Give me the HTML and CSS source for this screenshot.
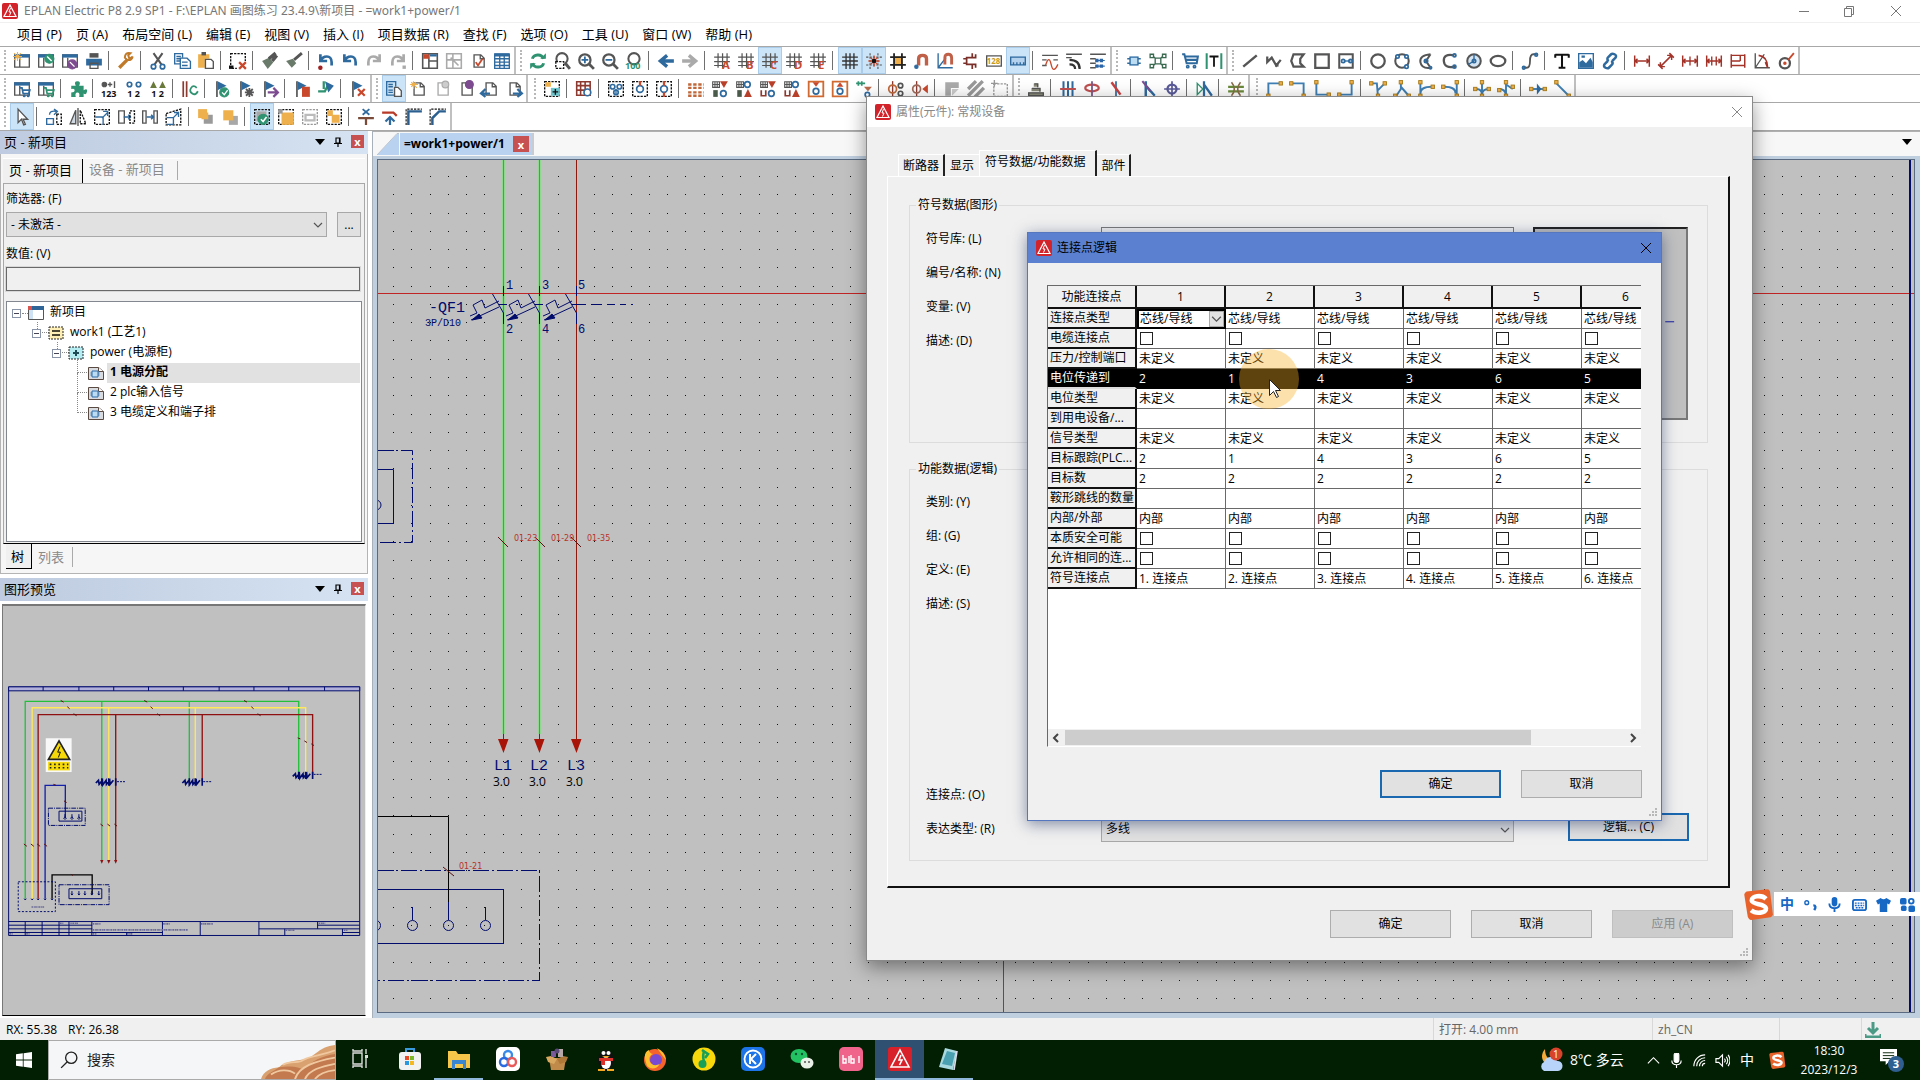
FILE: index.html
```html
<!DOCTYPE html>
<html lang="zh-CN">
<head>
<meta charset="utf-8">
<title>EPLAN Electric P8 2.9 SP1</title>
<link rel="stylesheet" href="styles.css">
</head>
<body>
<svg class="defs" aria-hidden="true">
  <symbol id="logo" viewBox="0 0 16 16"><rect width="16" height="16" rx="2" fill="#d2232a"/><path d="M8 2 14 13.500H2Z" fill="none" stroke="#fff" stroke-width="1.200"/><path d="M8.500 5 7 9h2l-1.500 3.500" fill="none" stroke="#fff"/></symbol>
  <symbol id="chev" viewBox="0 0 12 12"><path d="M2 4l4 4 4-4" fill="none" stroke="#555" stroke-width="1.200"/></symbol>
  <symbol id="close" viewBox="0 0 12 12"><path d="M1 1l10 10M11 1 1 11" fill="none" stroke="currentColor"/></symbol>
  <symbol id="pin" viewBox="0 0 10 10"><path d="M3 1h4v5H3zM1 6.500h8M5 6v4M6.500 1v5" fill="none" stroke="#000" stroke-width="1.200"/></symbol>
  <symbol id="down" viewBox="0 0 10 6"><path d="M0 0h10L5 6z"/></symbol>
  <symbol id="page" viewBox="0 0 16 16"><path d="M.5 2.500h10l5 4v8H.5z" fill="#d8dce0" stroke="#5a4a42"/><path d="M10.500 2.500v4h5" fill="#fff" stroke="#5a4a42"/><path d="M4 6h6v6H4z" fill="#bcdcf4" stroke="#2f6da8"/><path d="M2.500 8h1.500M2.500 10h1.500M10 8h1.500M10 10h1.500" stroke="#2f6da8"/></symbol>
  <symbol id="grip" viewBox="0 0 9 9"><path d="M6 0h2v2H6zM3 3h2v2H3zM6 3h2v2H6zM0 6h2v2H0zM3 6h2v2H3zM6 6h2v2H6z" fill="#b8b8b8"/></symbol>
  <symbol id="sogou" viewBox="0 0 28 28"><path d="M4 3 22 1q2 0 2.500 2L27 23q0 2-2 2.500L8 28q-2 0-3-3L2 6Q2 4 4 3" fill="#e8622a"/><path d="M21 9.500C17 5.500 8 7 8.500 11c.5 4 12 2.500 12.500 7 .5 4-9 5-13 1.500" fill="none" stroke="#fff" stroke-width="4"/></symbol>
</svg>

<div class="app">
  <header class="titlebar">
    <svg class="logo"><use href="#logo"/></svg>
    <h1>EPLAN Electric P8 2.9 SP1 - F:\EPLAN 画图练习 23.4.9\新项目 - =work1+power/1</h1>
    <div class="winbtns">
      <button aria-label="最小化"><svg viewBox="0 0 12 12"><path d="M1 6.500h10"/></svg></button>
      <button aria-label="还原"><svg viewBox="0 0 12 12"><path d="M1.500 3.500h7v8h-7zM3.500 3.500v-2h7v8h-2"/></svg></button>
      <button aria-label="关闭"><svg viewBox="0 0 12 12"><path d="M1 1l10 10M11 1 1 11"/></svg></button>
    </div>
  </header>
  <nav class="menu">
    <button>项目 (P)</button><button>页 (A)</button><button>布局空间 (L)</button><button>编辑 (E)</button><button>视图 (V)</button><button>插入 (I)</button><button>项目数据 (R)</button><button>查找 (F)</button><button>选项 (O)</button><button>工具 (U)</button><button>窗口 (W)</button><button>帮助 (H)</button>
  </nav>
  <div class="toolrow" id="row1"></div>
  <div class="toolrow" id="row2"></div>
  <div class="toolrow" id="row3"></div>

  <main class="work">
    <aside class="side">
      <section class="panel">
        <header class="phead"><h2>页 - 新项目</h2><svg class="dn"><use href="#down"/></svg><svg class="pin"><use href="#pin"/></svg><button class="x" aria-label="关闭">x</button></header>
        <div class="pbody">
          <div class="ptabs"><button class="on">页 - 新项目</button><button>设备 - 新项目</button></div>
          <div class="pform">
            <label for="filter">筛选器: (F)</label>
            <div class="frow">
              <div class="combo"><select id="filter"><option>- 未激活 -</option></select><svg><use href="#chev"/></svg></div>
              <button class="more">...</button>
            </div>
            <label for="val">数值: (V)</label>
            <input id="val" class="val" type="text">
            <ul class="tree">
              <li class="d0"><i></i><svg viewBox="0 0 16 16"><path d="M.5 1.500h15v13H.5z" fill="#fff" stroke="#555"/><path d="M0 1h4v4H0z" fill="#d9534f"/><path d="M4 1h12v4H4z" fill="#2f6496"/><path d="M1 5h4v9H1z" fill="#cfe2f3"/></svg><span>新项目</span></li>
              <li class="d1"><i></i><svg viewBox="0 0 16 16"><path d="M1 2h14v12H1z" fill="#fdeeb5" stroke="#222" stroke-dasharray="2 1"/><path d="M4 6h8M4 10h8" stroke="#4a4432" stroke-width="2"/></svg><span>work1 (工艺1)</span></li>
              <li class="d2"><i></i><svg viewBox="0 0 16 16"><path d="M1 2h14v12H1z" fill="#b5ecf2" stroke="#222" stroke-dasharray="2 1"/><path d="M5 8h6M8 5v6" stroke="#1c4a55" stroke-width="2"/></svg><span>power (电源柜)</span></li>
              <li class="d3 sel"><svg><use href="#page"/></svg><span>1 电源分配</span></li>
              <li class="d3"><svg><use href="#page"/></svg><span>2 plc输入信号</span></li>
              <li class="d3"><svg><use href="#page"/></svg><span>3 电缆定义和端子排</span></li>
            </ul>
          </div>
          <div class="btabs"><button class="on">树</button><button>列表</button></div>
        </div>
      </section>
      <section class="panel grow">
        <header class="phead"><h2>图形预览</h2><svg class="dn"><use href="#down"/></svg><svg class="pin"><use href="#pin"/></svg><button class="x" aria-label="关闭">x</button></header>
        <div class="preview">
          <svg viewBox="6 103 1092 1232">
            <g fill="none" stroke="#000b6b" stroke-width="3">
              <path d="M23 346h1059v750H23z"/><path d="M23 346h1059v12H23z" fill="#b0b0da"/>
              <path d="M127 346v12M235 346v12M340 346v12M445 346v12M550 346v12M658 346v12M763 346v12M868 346v12M976 346v12"/>
              <path d="M23 1054h1059M23 1065h252M23 1076h252M23 1087h465M73 1054v42M124 1054v42M175 1054v42M205 1054v42M274 1054v42M487 1054v42M601 1054v42M778 1054v42M778 1076h304M955 1054v22M856 1076v20M1030 1076v20M955 1065h127M1030 1087h52M379 1087v9"/>
            </g>
            <g fill="none" stroke-width="4">
              <path stroke="#22c03a" d="M73 985V390h825v220M304 390v482M568 390v240"/>
              <path stroke="#ffe95a" d="M94 985V409h825v200M325 409v463M586 409v220"/>
              <path stroke="#8e1010" d="M112 985V430h828v180M346 430v442M607 430v200"/>
              <path stroke="#1420a8" d="M133 985V643h61v98"/>
              <path stroke="#000" d="M154 985v-72h121v58"/>
            </g>
            <g fill="none" stroke="#000b6b" stroke-width="3">
              <path d="M143 712h111v52H143zM175 943h151v60H175z" stroke-dasharray="14 3 3 3"/><path d="M52 934h112v90H52z" stroke-dasharray="6 5"/>
              <path d="M175 721h69v30h-69zM205 955h99v30h-99zM193 730v10M214 730v10M235 730v10M214 962v12M235 962v12M253 962v12M274 962v12M295 962v12"/>
              <path stroke-width="3" d="M189 742l4 4 4-4-4-4zM210 742l4 4 4-4-4-4zM231 742l4 4 4-4-4-4zM211 970l3 4 3-4M232 970l3 4 3-4M250 970l3 4 3-4M271 970l3 4 3-4M292 970l3 4 3-4M70 985l3 4 3-4M91 985l3 4 3-4M109 985l3 4 3-4M130 985l3 4 3-4M151 985l3 4 3-4"/>
              <path stroke-width="5" d="M286 636l8-8 2 12 10-12 1 14 10-14 1 12 10-12 1 12 10-12M304 622v22M325 622v22M346 622v22M547 636l8-8 2 12 10-12 1 14 10-14 1 12 10-12 1 12 10-12M568 622v22M586 622v22M607 622v22M880 616l8-8 2 12 10-12 1 14 10-14 1 12 10-12 1 12 10-12M898 602v22M919 602v22M940 602v22"/>
              <path d="M350 632h25M610 632h25M943 610h25" stroke-dasharray="6 3"/>
            </g>
            <path stroke="#5c1010" stroke-width="3" fill="none" d="M180 387l9 5M432 387l9 5M733 387l9 5M200 406l7 6M451 406l7 6M755 406l7 6M219 427l9 6M471 427l9 6M774 427l9 6M69 820l9 7M90 820l9 7M109 820l9 7M130 820l9 7M300 760l8 6M321 760l8 6M342 760l8 6M895 500l8 3M915 509l8 5M936 518l8 5M158 640l8 3M190 690l8 5M211 911l6 4"/>
            <path fill="#8e1010" d="M299 868h10l-5 12zM320 868h10l-5 12zM341 868h10l-5 12z"/>
            <path fill="#f8f8f8" d="M135 501h78v102h-78z"/><path d="M175 509l32 56h-64z" fill="#f5d90a" stroke="#222" stroke-width="5"/><path d="M178 526l-7 17h8l-6 16" fill="none" stroke="#111" stroke-width="3"/><path fill="#f5d90a" d="M142 572h66v26h-66z"/><path d="M147 580h56M147 590h56" stroke="#222" stroke-width="5" stroke-dasharray="5 8"/>
            <path d="M92 1010h38M276 1079h288M603 1061h36M276 1061h24M489 1061h20M205 1059h28M178 1059h10M858 1080h28M958 1059h20M1034 1080h12M25 1091h10M76 1091h10M276 1091h12M380 1091h16" stroke="#6a6a98" stroke-width="5" stroke-dasharray="5 2 3 1"/>
          </svg>
        </div>
      </section>
    </aside>

    <section class="editor">
      <div class="etabs">
        <div class="etab"><svg class="slant" viewBox="0 0 22 22"><path d="M0 22 20 1h2v21z" fill="#b9d2f0"/><path d="M0 22 20 .5h2" fill="none" stroke="#b9c4d2"/></svg><button class="ename">=work1+power/1</button><button class="x" aria-label="关闭">x</button></div>
        <svg class="dn"><use href="#down"/></svg>
      </div>
      <div class="cframe">
        <svg class="canvas">
          <g transform="translate(-377 -159)">
            <path id="dots" fill="none" stroke="#111" shape-rendering="crispEdges"/>
            <path d="M503.500 159v575M539.500 159v575" stroke="#8fd68f" stroke-width="3"/><path d="M503.500 159v575M539.500 159v575" stroke="#2fb52f"/>
            <path d="M576.500 159v590M503.500 734v15M539.500 734v15" stroke="#8c1a0c"/>
            <path d="M377 293.500h1540M1003.500 200v820" stroke="#c02424"/>
            <g fill="none" stroke="#000b6b">
              <path d="M503.500 286v10M539.500 286v10M576.500 286v10"/>
              <path id="pole" d="M492.500 294l11 19v11M499 301l-14 7-3-8-9 5 4 8-7 3M499 307l-28 13"/>
              <use href="#pole" x="36"/><use href="#pole" x="73"/>
              <path d="M472 320l7-6 3 4zM508 320l7-6 3 4zM545 320l7-6 3 4z" fill="#000b6b"/>
              <path d="M499 304.500h8M516 304.500h2M535 304.500h8M572 304.500h14M591 304.500h11M607 304.500h8M620 304.500h6M631 304.500h2"/>
              <path d="M377 450.500h35.500v92H377M377 870.500h162.500v110H377" stroke-dasharray="16 3 2 3"/>
              <path d="M377 469.500h16.500v54H377M377 889.500h126.500v54H377M412.500 907v13M448.500 900v20M485.500 907v13"/>
              <circle cx="376" cy="505" r="5"/><circle cx="375" cy="925.500" r="5.500"/><circle cx="412.500" cy="925.500" r="5"/><circle cx="448.500" cy="925.500" r="5"/><circle cx="485.500" cy="925.500" r="5"/>
              <path d="M1910 159v860" stroke-width="2"/>
            </g>
            <path d="M377 816.500h71.500V902" fill="none" stroke="#000"/>
            <path d="M498 537l10 10M535 537l10 10M571 537l10 10M443 867l11 9" stroke="#5c1010"/>
            <path d="M498 739h10.500l-5 14zM534 739h10.500l-5 14zM571 739h10.500l-5 14z" fill="#a81408"/>
            <g class="nav"><text x="506" y="289">1</text><text x="542" y="289">3</text><text x="578" y="289">5</text><text x="506" y="333">2</text><text x="542" y="333">4</text><text x="578" y="333">6</text><text x="425" y="326" class="sm">3P/D10</text><text x="429" y="312" class="big">-QF1</text><text x="494" y="770" class="big">L1</text><text x="530" y="770" class="big">L2</text><text x="567" y="770" class="big">L3</text></g>
            <g class="blk"><text x="493" y="786">3.0</text><text x="529" y="786">3.0</text><text x="566" y="786">3.0</text></g>
            <g class="red"><text x="514" y="541">01-23</text><text x="551" y="541">01-29</text><text x="587" y="541">01-35</text><text x="459" y="869">01-21</text></g>
          </g>
        </svg>
      </div>
    </section>
  </main>

  <footer class="status"><span class="s0">RX: 55.38</span><span class="s1">RY: 26.38</span><span class="s2">打开: 4.00 mm</span><span class="s3">zh_CN</span><span class="s4"></span><span class="s5"><svg viewBox="0 0 16 16"><path d="M8 0v9M3 6l5 5 5-5M0 12v3h16v-3" fill="none" stroke="#4a9a86" stroke-width="3"/></svg></span></footer>

  <footer class="taskbar">
    <button class="start" aria-label="开始"><svg viewBox="0 0 16 16"><path fill="#fff" d="M0 2.300 6.800 1.300v6.200H0zM7.600 1.200 16 0v7.500H7.600zM0 8.400h6.800v6.300L0 13.700zM7.600 8.400H16V16l-8.400-1.200z"/></svg></button>
    <label class="search"><svg viewBox="0 0 16 16"><circle cx="10" cy="6" r="5"/><path d="M6.500 9.500 1 15"/></svg><input type="search" placeholder="搜索" aria-label="搜索">
      <svg class="canyon" viewBox="0 0 74 38" preserveAspectRatio="none"><path d="M0 38c3-9 9-12 18-13 6-8 20-7 28-10 8-2 12-13 28-15v38z" fill="#d9a070"/><path d="M18 25c12-2 20-1 24 3 8-10 20-16 32-18v28H4c2-6 8-8 14-13z" fill="#c27a4e"/><path d="M10 33c8-6 18-6 24-1M22 22c8-5 16-1 20-5s22-6 32-11M34 38c4-14 20-20 40-24M44 38c4-10 16-14 30-17M54 38c4-6 12-9 20-10" fill="none" stroke="#f0c8a0" stroke-width="2"/></svg></label>
    <div class="apps" id="apps"></div>
    <div class="tray">
      <svg class="wx" viewBox="0 0 26 26"><path d="M7 2c0 8 4 12 11 12-3 4-13 5-14-4Q4 5 7 2" fill="#f5a83a"/><path d="M6 24a5 5 0 0 1 0-9 7 7 0 0 1 13-1 5 5 0 0 1 1 10z" fill="#b8d4f8"/><circle cx="18" cy="7" r="6.500" fill="#d8432c"/><text x="15" y="11" font-size="10" fill="#fff">1</text></svg>
      <span class="wt">8℃ 多云</span>
      <svg viewBox="0 0 16 16" class="st"><path d="M2 11l6-6 6 6"/></svg>
      <svg viewBox="0 0 16 16" class="st"><rect x="5.500" y="0" width="5" height="10" rx="2" fill="#fff"/><path d="M3 8q0 4.500 5 4.500T13 8M8 12v4"/></svg>
      <svg viewBox="0 0 16 16" class="st"><path d="M2 14A12 12 0 0 1 14 2M5 14a9 9 0 0 1 9-9M8 14a6 6 0 0 1 6-6M11 14a3 3 0 0 1 3-3"/></svg>
      <svg viewBox="0 0 16 16" class="st"><path d="M1 6h3l4-4v12l-4-4H1zM10 6q2 2 0 4M12 4q3 4 0 8M14 2q4 6 0 12"/></svg>
      <span class="ime">中</span>
      <svg viewBox="0 0 28 28" class="sg"><use href="#sogou"/></svg>
      <time class="clock"><span>18:30</span><span>2023/12/3</span></time>
      <div class="note"><svg viewBox="0 0 18 18"><path d="M0 0h18v13h-8l-4 4v-4H0z" fill="#fff"/><path d="M3 4h12M3 7h12M3 10h8" stroke="#031f03"/></svg><b>3</b></div>
    </div>
  </footer>
</div>

<section class="dlg props" role="dialog" aria-label="属性(元件): 常规设备">
  <header><svg class="logo"><use href="#logo"/></svg><h2>属性(元件): 常规设备</h2><button class="cl" aria-label="关闭"><svg><use href="#close"/></svg></button></header>
  <div class="dtabs"><button>断路器</button><button>显示</button><button class="on">符号数据/功能数据</button><button>部件</button></div>
  <div class="dpage">
    <fieldset class="g1"><legend>符号数据(图形)</legend>
      <div class="cols">
        <div class="fields">
          <label for="lib">符号库: (L)</label><input id="lib" type="text">
          <label for="num">编号/名称: (N)</label><input id="num" type="text">
          <label for="var">变量: (V)</label><input id="var" type="text">
          <label for="d1">描述: (D)</label><input id="d1" type="text">
        </div>
        <div class="sym"><svg viewBox="0 0 153 191"><path d="M20 94h124" stroke="#1418a0" stroke-dasharray="9 5" fill="none"/></svg></div>
      </div>
    </fieldset>
    <fieldset class="g2"><legend>功能数据(逻辑)</legend>
      <div class="fields">
        <label for="ty">类别: (Y)</label><input id="ty" type="text">
        <label for="gr">组: (G)</label><input id="gr" type="text">
        <label for="de">定义: (E)</label><input id="de" type="text">
        <label for="d2">描述: (S)</label><input id="d2" type="text">
      </div>
      <div class="cols bot">
        <div class="fields">
          <label for="co">连接点: (O)</label><input id="co" type="text">
          <label for="re">表达类型: (R)</label><div class="combo"><select id="re"><option>多线</option></select><svg><use href="#chev"/></svg></div>
        </div>
        <button class="btn def">逻辑... (C)</button>
      </div>
    </fieldset>
  </div>
  <div class="btns"><button class="btn">确定</button><button class="btn">取消</button><button class="btn" disabled>应用 (A)</button></div>
  <svg class="rsz"><use href="#grip"/></svg>
</section>

<section class="dlg logic" role="dialog" aria-label="连接点逻辑">
  <header><svg class="logo"><use href="#logo"/></svg><h2>连接点逻辑</h2><button class="cl" aria-label="关闭"><svg><use href="#close"/></svg></button></header>
  <div class="gridbox">
    <div class="gclip"><table><thead><tr><th>功能连接点</th><th>1</th><th>2</th><th>3</th><th>4</th><th>5</th><th>6</th></tr></thead><tbody id="grid"></tbody></table></div>
    <div class="sb"><svg viewBox="0 0 12 12"><path d="M8 2 4 6l4 4"/></svg><i></i><svg viewBox="0 0 12 12"><path d="M4 2l4 4-4 4"/></svg></div>
  </div>
  <div class="btns"><button class="btn def">确定</button><button class="btn">取消</button></div>
  <svg class="rsz"><use href="#grip"/></svg>
</section>

<div class="imebar">
  <svg class="big" viewBox="0 0 28 28"><use href="#sogou"/></svg>
  <div><b>中</b>
  <svg viewBox="0 0 16 16"><circle cx="4" cy="6" r="2" fill="none" stroke="#1668c4" stroke-width="1.500"/><path d="M11 9q4 0 1 5" fill="none" stroke="#1668c4" stroke-width="2.500"/></svg>
  <svg viewBox="0 0 16 16"><rect x="5" y="0" width="6" height="10" rx="3" fill="#1668c4"/><path d="M2.500 7q0 5 5.500 5t5.500-5M8 12v4" fill="none" stroke="#1668c4" stroke-width="2"/></svg>
  <svg viewBox="0 0 16 16"><rect x="1" y="3" width="14" height="11" rx="2" fill="none" stroke="#1668c4" stroke-width="2"/><path d="M3 6.500h10M3 9h10M4 11.500h8" stroke="#1668c4" stroke-width="1.500" stroke-dasharray="2 1"/></svg>
  <svg viewBox="0 0 16 16"><path d="M5 1q3 3 6 0l5 3-2 4-2-1v9H4V7L2 8 0 4z" fill="#1668c4"/></svg>
  <svg viewBox="0 0 16 16" fill="#1668c4"><rect y="1" width="7" height="7" rx="2"/><rect x="1" y="9" width="6" height="6" rx="2"/><rect x="9" y="9" width="7" height="7" rx="2"/><circle cx="12" cy="4.500" r="2.500" fill="none" stroke="#1668c4" stroke-width="2"/></svg></div>
</div>
<div class="spot"></div>
<svg class="cursor" viewBox="0 0 12 19"><path d="M.5.5v16l4-4 3 6 2-1-3-6h5z" fill="#fff" stroke="#222"/></svg>
<script src="app.js"></script>
</body>
</html>
```
FILE: styles.css
```css
*, *::before { box-sizing: border-box; }
html, body { height: 100%; }
body { margin: 0; overflow: hidden; font: 12px/16px "Open Sans", "Noto Sans CJK SC", sans-serif; color: #000; background: #f0f0f0; }
h1, h2, ul { margin: 0; padding: 0; font-size: inherit; font-weight: 400; list-style: none; }
button { font: inherit; color: inherit; background: none; border: 0; padding: 0; white-space: nowrap; }
input, select { font: inherit; color: inherit; border-radius: 0; margin: 0; }
svg { display: block; flex: none; }
.defs { position: absolute; width: 0; height: 0; }
.logo { width: 16px; height: 16px; }
.app { height: 100vh; display: flex; flex-direction: column; }

.titlebar { height: 23px; display: flex; align-items: center; gap: 6px; padding-left: 2px; background: #fff; color: #777; flex: none; border-bottom: 1px solid #f0f0f0; }
.titlebar h1 { font-family: "Noto Sans", "Noto Sans CJK SC", sans-serif; }
.winbtns { margin-left: auto; display: flex; }
.winbtns button { width: 45px; display: grid; place-items: center; }
.winbtns button:last-child { width: 49px; }
.winbtns svg { width: 12px; height: 12px; fill: none; stroke: #777; }
.menu { height: 23px; display: flex; padding: 0 0 2px 10px; background: #fff; font-size: 13px; flex: none; }
.menu button { padding: 0 7px; }

.toolrow { height: 28px; display: flex; background: #fff; border-top: 1px solid #a8a8a8; flex: none; }
#row3 { height: 29px; border-bottom: 1px solid #a8a8a8; }
.bar { display: flex; align-items: stretch; border-right: 2px solid #c0c0c0; }
.bar::before { content: ""; width: 2px; margin: 3px 4px; border-left: 2px dotted #b8b8b8; }
.bar.wide::before { margin-left: 6px; }
.bar i { width: 8px; padding: 4px 0; }
.bar i::before { content: ""; display: block; width: 1px; height: 100%; margin-left: 2px; background: #707070; }
.bar button { width: 24px; display: grid; place-items: center; }
.bar button.on { background: #cce4f7; outline: 1px solid #a9cdea; outline-offset: -1px; }
.bar svg { width: 18px; height: 18px; overflow: visible; }

.work { flex: 1; min-height: 0; display: flex; gap: 4px; background: #fff; }
.side { width: 368px; flex: none; display: flex; flex-direction: column; gap: 4px; padding-bottom: 2px; }
.panel { display: flex; flex-direction: column; height: 443px; }
.panel.grow { height: auto; flex: 1; min-height: 0; gap: 3px; }
.phead { height: 23px; display: flex; align-items: center; padding: 0 4px 2px; background: linear-gradient(90deg, #becbe0, #d5e3f2); font-size: 13px; flex: none; }
.phead h2 { flex: 1; }
.dn { width: 10px; height: 6px; }
.pin { width: 10px; height: 10px; margin: 0 8px; }
.x { width: 13px; height: 13px; background: #c75050; color: #fff; font-size: 11px; line-height: 10px; font-weight: 700; }
.pbody { flex: 1; display: flex; flex-direction: column; border: 1px solid #b4b4b4; border-top: 0; background: #f6f6f6; padding: 4px 2px 3px; }
.ptabs { display: flex; height: 25px; font-size: 13px; border-top: 1px solid #fff; }
.ptabs button, .btabs button { color: #8a8a8a; padding: 0 12px 0 6px; border-right: 1px solid #aaa; margin: 3px 0; }
.ptabs button { margin: 2px 0 3px; padding-bottom: 3px; }
.ptabs .on { color: #000; margin: 0; padding-right: 10px; border-right: 1px solid #000; background: #f0f0f0; }
.pform { flex: 1; border: 1px solid #a8a8a8; border-bottom: 1px solid #000; background: #f0f0f0; padding: 5px 2px 1px; display: flex; flex-direction: column; }
.pform label { height: 23px; line-height: 20px; }
.frow { display: flex; gap: 10px; height: 25px; margin-bottom: 7px; }
.combo { flex: 1; position: relative; background: #e1e1e1; border: 1px solid #a8a8a8; height: 25px; }
.combo select { width: 100%; height: 100%; appearance: none; border: 0; background: none; padding: 0 4px; }
.combo svg { position: absolute; right: 2px; top: 6px; width: 12px; height: 12px; }
.more { width: 24px; background: #e1e1e1; border: 1px solid #a8a8a8; margin-right: 1px; }
.val { height: 24px; background: #f0f0f0; border: 1px solid #696969; outline: 1px solid #d8d8d8; margin-right: 2px; }
.tree { flex: 1; margin-top: 10px; background: #fff; border: 1px solid #828790; padding: 1px 0; }
.tree li { height: 20px; display: flex; align-items: center; position: relative; gap: 6px; }
.tree li svg { width: 16px; height: 16px; }
.tree li span { padding: 1px 0 3px; flex: 1; }
.tree li i { width: 9px; height: 9px; border: 1px solid #8a94a8; background: linear-gradient(#445, #445) center / 5px 1px no-repeat #fff; margin-right: 1px; }
.tree li::before { content: ""; position: absolute; border-left: 1px dotted #888; border-bottom: 1px dotted #888; }
.d0 { padding-left: 5px; } .d1 { padding-left: 25px; } .d2 { padding-left: 45px; } .d3 { padding-left: 81px; }
.tree .d0::before { left: 15px; top: 10px; width: 6px; }
.tree .d1::before, .tree .d2::before { left: 30px; top: -1px; height: 11px; width: 12px; z-index: 0; }
.tree .d2::before { left: 50px; }
.tree .d3::before { left: 70px; top: -10px; height: 20px; width: 10px; }
.tree i, .tree li svg { position: relative; z-index: 1; }
.sel span { background: #e1e1e1; font-weight: 700; margin: 0 1px 0 -3px; }
.tree .sel span { padding: 1px 3px 3px; }
.btabs { height: 26px; display: flex; font-size: 13px; padding-left: 3px; }
.btabs .on { color: #000; margin: 0 0 1px; padding: 0 7px 0 5px; border-right: 1px solid #000; border-bottom: 1px solid #000; background: #f0f0f0; }
.btabs button + button { padding: 0 8px 0 6px; }
.preview { flex: 1; min-height: 0; margin: 0 2px; border: 1px solid #000; border-top: 2px solid #777; border-left-color: #777; border-right-color: #eee; background: #c0c0c0; }
.preview svg { width: 100%; height: 100%; }

.editor { flex: 1; min-width: 0; display: flex; flex-direction: column; border-left: 1px solid #a8b0ba; }
.etabs { height: 25px; display: flex; align-items: flex-end; background: #f7f7f7; padding: 0 8px 1px 4px; border-top: 1px solid #b0b0b0; flex: none; }
.etab { display: flex; height: 22px; align-items: center; border-right: 2px solid #c8ccd2; padding-right: 3px; background: linear-gradient(#b9d2f0, #b9d2f0) right / 132px 100% no-repeat; }
.slant { width: 22px; height: 22px; }
.ename { font-weight: 700; padding: 0 8px 0 5px; }
.etab .x { width: 16px; height: 16px; line-height: 13px; }
.etabs > .dn { margin: 0 0 10px auto; }
.cframe { flex: 1; min-height: 0; border: 3px solid #c0cfe0; border-left-width: 4px; border-bottom-width: 5px; border-right-width: 5px; display: flex; background: #c0c0c0; }
.canvas { flex: 1; width: 100%; height: 100%; outline: 1px solid #5a6a80; outline-offset: -1px; }
.canvas text { font-family: "Liberation Mono", monospace; font-size: 12px; }
.nav text { fill: #000b6b; }
.canvas .big { font-size: 15px; }
.canvas .sm { font-size: 10px; }
.canvas .blk text { font-family: "Open Sans", sans-serif; font-size: 12px; }
.canvas .red text { font-family: "DejaVu Sans", sans-serif; font-size: 8px; fill: #b83228; }

.status { height: 22px; display: flex; align-items: center; background: #f0f0f0; flex: none; padding-left: 6px; color: #666; }
.status span { height: 100%; line-height: 24px; border-left: 1px solid #d8d8d8; padding-left: 5px; }
.status .s0, .status .s1 { border: 0; padding: 0; color: #000; width: 62px; }
.status .s1 { flex: 1; }
.s2 { width: 219px; } .s3 { width: 127px; } .s4 { width: 82px; }
.status .s5 { width: 59px; padding-left: 3px; }
.status svg { width: 16px; height: 16px; margin-top: 4px; }

.taskbar { height: 40px; display: flex; background: #031f03; color: #fff; flex: none; }
.start { width: 48px; display: grid; place-items: center; }
.start svg { width: 16px; height: 16px; }
.search { width: 288px; background: #f4f6f8; border: 1px solid #aaa; display: flex; align-items: center; position: relative; padding-left: 11px; gap: 9px; }
.search > svg:first-child { width: 18px; height: 18px; fill: none; stroke: #222; stroke-width: 1.2px; }
.search input { border: 0; background: none; width: 150px; font-size: 14px; padding: 0; outline: 0; }
.search input::placeholder { color: #222; opacity: 1; }
.canyon { position: absolute; right: 0; bottom: 0; width: 74px; height: 34px; }
.apps { display: flex; }
.apps button { width: 49px; display: grid; place-items: center; border-bottom: 2px solid transparent; }
.apps .run { border-color: #8fb8dc; }
.apps .cur { background: #2f5070; border-color: #8fb8dc; }
.apps svg { width: 24px; height: 24px; }
.tray { margin-left: auto; display: flex; align-items: center; padding-right: 18px; gap: 8px; }
.wx { width: 26px; height: 26px; }
.wt { font-size: 14px; width: 68px; white-space: nowrap; }
.st { width: 15px; height: 15px; fill: none; stroke: #fff; stroke-width: 1.2px; }
.wx + .wt { margin-left: -2px; }
.ime { font-size: 14px; margin-left: 2px; }
.sg { width: 18px; height: 18px; margin-left: 6px; }
.clock { display: flex; flex-direction: column; align-items: center; gap: 3px; width: 70px; margin-right: 8px; }
.note { position: relative; width: 22px; height: 22px; }
.note svg { width: 17px; height: 17px; }
.note b { position: absolute; left: 8px; top: 7px; width: 16px; height: 16px; border-radius: 8px; background: #2f5f90; font-size: 11px; text-align: center; }

.dlg { position: absolute; background: #f0f0f0; display: flex; flex-direction: column; }
.dlg header { display: flex; align-items: center; height: 30px; gap: 5px; background: #fff; color: #888; padding: 0 8px; flex: none; }
.dlg h2 { flex: 1; }
.cl svg { width: 12px; height: 12px; }
.props { left: 866px; top: 96px; width: 887px; height: 865px; border: 1px solid #8a8a8a; box-shadow: 0 6px 18px rgba(0,0,0,.42); }
.dlg.props header { padding: 0 9px 0 8px; }
.logic { left: 1027px; top: 232px; width: 635px; height: 589px; border: 1px solid #5577c0; box-shadow: 0 3px 14px rgba(20,40,90,.5); }
.dlg.logic header { background: #5b80d0; color: #000; padding: 0 9px 0 8px; }
.dtabs { display: flex; align-items: flex-end; height: 27px; margin: 22px 0 0 31px; flex: none; }
.dtabs button { height: 22px; padding: 0 4px; border-top: 1px solid #fff; border-right: 2px solid #222; }
.dtabs button:nth-child(2) { border-right: 0; padding: 0 5px; }
.dtabs .on { height: 26px; padding: 0 10px 3px 5px; border-left: 1px solid #fff; }
.dtabs button:first-child { border-left: 1px solid #fff; }
.dpage { flex: 1; margin: 0 22px 0 20px; border: 1px solid #fff; border-right: 2px solid #111; border-bottom: 2px solid #111; padding: 20px 20px 24px 21px; }
fieldset { margin: 0; padding: 0 18px 0 16px; border: 1px solid #dcdcdc; min-width: 0; }
legend { margin-left: -10px; padding: 0 2px; }
.g1 { height: 246px; }
.g2 { height: 400px; margin-top: 18px; }
.cols { display: flex; gap: 19px; align-items: flex-start; }
.fields { display: grid; grid-template-columns: 175px 413px; grid-auto-rows: 24px; row-gap: 10px; align-items: center; padding-top: 14px; }
.fields input { height: 24px; border: 1px solid #7a7a7a; background: #f0f0f0; }
.sym { width: 155px; height: 193px; margin-top: 14px; background: #c0c0c0; border: 2px solid #222; border-right-color: #777; border-bottom-color: #777; }
.g2 .fields { padding-top: 13px; }
.cols.bot .fields { padding-top: 167px; }
.cols.bot { align-items: flex-end; gap: 54px; }
.btn { width: 121px; height: 28px; background: #e1e1e1; border: 1px solid #adadad; flex: none; }
.btn.def { border: 2px solid #1a68b0; }
.btn:disabled { background: #ccc; color: #8a8a8a; border-color: #bfbfbf; }
.btns { display: flex; justify-content: flex-end; gap: 20px; margin: 22px 19px 22px 0; }
.rsz { position: absolute; right: 3px; bottom: 3px; width: 9px; height: 9px; }
.gridbox { margin: 22px 20px 0 19px; height: 462px; border: 1px solid #696969; border-right: 0; border-bottom: 1px solid #fff; background: #fff; display: flex; flex-direction: column; flex: none; }
.gclip { flex: 1; overflow: hidden; min-height: 0; }
.logic .btns { margin: 23px 19px 21px 0; }
table { border-collapse: separate; border-spacing: 0; table-layout: fixed; width: 623px; }
th, td { height: 20px; padding: 0 2px; text-align: left; font-weight: 400; line-height: 16px; border-right: 1px solid #696969; border-bottom: 1px solid #696969; white-space: nowrap; overflow: hidden; width: 89px; }
th { background: #f0f0f0; border-right: 2px solid #111; border-bottom: 2px solid #111; }
thead th { height: 23px; text-align: center; }
td input[type=checkbox] { appearance: none; display: block; width: 13px; height: 13px; border: 1px solid #222; background: #fff; margin: 0 0 0 1px; }
.hot th, .hot td { background: #000; color: #fff; border-color: #000; }
.hot th { border-bottom-color: #ddd; }
td.cell { padding: 0; border: 2px solid #000; }
.cell div { display: flex; height: 16px; }
.cell select { flex: 1; min-width: 0; appearance: none; border: 0; background: #fff; padding: 0 1px; height: 16px; }
.cell svg { width: 15px; height: 16px; background: #e1e1e1; border: 1px solid #aaa; }
.sb { height: 17px; display: flex; align-items: center; background: #f0f0f0; padding: 0 2px; gap: 3px; }
.sb svg { width: 12px; height: 12px; fill: none; stroke: #444; stroke-width: 2px; }
.sb i { height: 15px; width: 466px; background: #cdcdcd; margin-right: auto; }

.imebar { position: absolute; left: 1742px; right: 0; top: 888px; display: flex; align-items: center; }
.imebar .big { width: 32px; height: 32px; z-index: 1; }
.imebar div { flex: 1; height: 24px; background: #fff; display: flex; align-items: center; justify-content: space-between; padding: 0 5px 0 6px; color: #1668c4; }
.imebar div svg { width: 15px; height: 15px; }
.imebar b { font-size: 14px; }
.spot { position: absolute; left: 1239px; top: 349px; width: 60px; height: 60px; border-radius: 50%; background: rgba(250,175,40,.38); }
.cursor { position: absolute; left: 1269px; top: 379px; width: 12px; height: 19px; }
```
FILE: app.js
```js
// Icon drawing helpers: p = stroked path, f = filled path, t = small caption.
const B = '#2f6a9f', G = '#555', R = '#c9482c', O = '#eeb04c', T = '#2f9270', V = '#7d4b90', L = '#aaa', K = '#111';
const p = (d, c = G, w = 1.2, x = '') => `<path d="${d}" fill="none" stroke="${c}" stroke-width="${w}" ${x}/>`;
const f = (d, c = G) => `<path d="${d}" fill="${c}"/>`;
const o = (x, y, r, c = G, w = 1.5, k = 'none') => `<circle cx="${x}" cy="${y}" r="${r}" fill="${k}" stroke="${c}" stroke-width="${w}"/>`;
const t = (s, x, y, c, z = 8) => `<text x="${x}" y="${y}" fill="${c}" font-size="${z}" font-weight="700">${s}</text>`;
const dash = 'stroke-dasharray="2 1"';
const win = p('M1.5 2.500h13v11h-13zM6 5v8') + f('M1 2h14v3H1z', B);
const doc = (c = G) => p('M4.500 2.500h6l3 3v8h-9zM10 2.500v3.500h3.500', c);
const flag = p('M3.500 1v14', G, 1.5) + f('M4 1l8 4-8 4z', B);
const hash = p('M4.500 1v13M8.500 1v13M12.500 1v10M1 4.500h14M1 8.500h14M1 12h9', G, 1.1);
const lens = p('M10.500 10.500 15 15', G, 2.5) + o(7, 7, 5, G, 2);
const box = p('M1.500 1.500h13v13h-13z', K, 1.2, dash);
const undo = c => p('M3 2v6h6M3.500 8C5 3 13 2 13 9v3', c, 2.4);
const redo = c => p('M13 2v6H7M12.500 8C11 3 3 2 3 9v3', c, 2.4);
const dot = (x, y) => `<rect x="${x - 1.5}" y="${y - 1.5}" width="3" height="3" fill="${O}" stroke="#a87a18" stroke-width=".8"/>`;
const cart = c => p('M6 7h2l1 5h5l1-3H9', c, 1.5) + o(10, 14, .6, c) + o(13.5, 14, .6, c);
const conn = (d, ...q) => p(d, '#3f7fb4', 1.7) + q.map(a => dot(...a)).join('');
const dim = x => p('M1.500 3v10M14.500 3v10M2 8h12M4 6 2 8l2 2M12 6l2 2-2 2', '#a33228', 1.3) + x;
const mini = p('M1.500 1.500h6v5h-6zM3.500 1.500v5M5.500 1.500v5M1.500 4h6', G, 1);
const I = {
  proj1: win + p('M4 0v8M0 4h8M1 1l6 6M7 1 1 7', O, 1), proj2: win + o(11, 6, 4, T, 1, T) + p('M9 4l4 4', '#fff'), proj3: win + o(10, 11, 4, V, 1, V) + p('M12 13 8 9', '#fff'),
  print: f('M4 1h8v4H4z', G) + f('M1 6h14v6H1z', B) + p('M4.500 10h7v4.500h-7z', G, 1.2),
  wrench: p('M2 14 9 7', '#c07a2a', 3) + p('M14 4l-3 2-1-3 2-2q-5-1-5 4l2 2q4 1 5-3', '#c07a2a', 1.8),
  cut: p('M4 1l7 10M12 1 5 11', G, 1.8) + o(4, 13, 2, B) + o(12, 13, 2, B),
  copy: p('M1.500 1.500h7v9h-7zM3 4h4M3 6h4M3 8h4', B) + f('M7 5h6l2 3v7H7z', '#fff') + p('M6.500 5.500h6l3 3v6h-9zM8 9h5M8 12h5', B),
  paste: f('M1 2h10v12H1z', O) + f('M4 0h4v3H4z') + f('M7 6h5l3 3v6H7z', '#fff') + p('M7.500 6.500h5l2 2v6h-7z'),
  selx: box + f('M7 8h9v8H7z', '#fff') + p('M9 9l6 6M15 9l-6 6', R, 2) + f('M0 12h4v3H0z', K),
  br1: f('M1 8l6-3 4 4-5 6z', '#6a7a6a') + p('M7 6l6-5M10 8l4-5', G, 3), br2: f('M1 8l6-2 3 4-4 4z', '#6a7a6a') + p('M8 7l7-6', G, 2.5),
  undo0: undo(B) + o(3, 14, 1.5, '#a02020', 1, '#a02020'), undo: undo(B), redo: redo(L), redo0: redo(L) + f('M12 12h3v3h-3z', L),
  w1: p('M1.500 1.500h13v13h-13zM7 2v12M7 8h7', G, 1.4) + f('M2 2h5v4H2z', R) + f('M8 2h6v2H8z', B), w2: p('M1.500 1.500h13v13h-13zM7 2v12M2 7h12M5 5l7 7', L, 1.4),
  chk: doc() + p('M6 9l2 3 4-6', R, 1.6), tab: p('M1.500 2.500h13v12h-13zM1.500 6h13M1.500 9h13M1.500 12h13M6 2v12M10 2v12', B) + f('M1 1h14v3H1z', B),
  ref: p('M13 6C11 1 4 2 3 6M3 10c2 5 9 4 10 0', T, 2.6) + f('M10 6h5V1zM6 10H1v5z', T),
  zs: o(8, 6, 5, G, 1.8) + p('M11 10l4 5', G, 2.5) + f('M2 8h8v7H2z', '#fff') + p('M2.500 8.500h7v6h-7z', K, 1.2, dash), zi: lens + p('M4 7h6M7 4v6', B, 1.6), zo: lens + p('M4 7h6', B, 1.6), z1: o(8, 6, 5, G, 1.8) + t('100', 0, 15, T, 8),
  al: p('M9 3 3 8l6 5M3 8h12', B, 3), ar: p('M7 3l6 5-6 5M13 8H1', L, 3),
  gA: hash + t('A', 8, 15, R, 10), gB: hash + t('B', 8, 15, R, 10), gC: hash + t('C', 8, 15, R, 10), gD: hash + t('D', 8, 15, R, 10), gE: hash + t('E', 8, 15, R, 10),
  grid: p('M4.500 1v14M8 1v14M11.500 1v14M1 4.500h14M1 8h14M1 11.500h14', '#333'), gsn: p('M1 4.500h14M1 11.500h14M4.500 1v14M11.500 1v14', '#555', 1, dash) + p('M3 8h10M8 3v10M5 5l6 6M11 5l-6 6', R) + o(8, 8, 1.5, K, 1, K),
  gob: f('M4 4h8v8H4z', O) + p('M4.500 1v14M11.500 1v14M1 4.500h14M1 11.500h14', '#222', 1.6), mag: p('M5 12V6q0-3 3.500-3T12 6v6', '#c06048', 3) + o(3, 13, 1.5, B, 1, B), magl: p('M1 1v13h13M1 14 8 5', B) + p('M7 11V5q0-3 3-3t3 3v6', '#c06048', 2.6),
  lad: p('M10 1v4H5v6h5v4M2 6h3M2 10h3M13 2v3h-3M13 14v-3h-3', '#7a3028', 1.5), num: p('M1.500 3.500h13v9h-13z') + t('128', 1.5, 11, '#c79a20', 7), rul: f('M1 4h14v8H1z', '#b4d2ee') + p('M1.500 4.500h13v7h-13zM4 9v2M7 9v2M10 9v2M13 9v2', B),
  wav: p('M1 3h14M1 7h4M11 7h4M1 12h4') + p('M4 12q3-10 5-1t6 0', R), wif: p('M1 2h14M1 5h5') + p('M4 7q9 0 9 8M4 11q5 0 5 4', '#333', 2), dts: p('M1 2h14M1 6h5M1 10h5M1 14h5') + p('M7 6v3M11 6v3M7 11v3M11 11v3', '#2a65a8', 3) + p('M6 7.500h8M6 12.500h8', '#2a65a8', 1),
  chip: f('M4 4h8v8H4z', '#bcdcf4') + p('M4.500 4.500h7v7h-7zM2 6h2M2 10h2M12 6h2M12 10h2', B), net: p('M5.500 5.500h5v5h-5zM1 2h3v3H1zM12 2h3v3h-3zM1 11h3v3H1zM12 11h3v3h-3zM4 4l2 2M12 4l-2 2M4 12l2-2M12 12l-2-2', '#3a6a50'),
  crt: p('M1 2h2l2 8h9l1-6H4M5 7h9', B, 1.8) + o(6, 13, 1, B) + o(12, 13, 1, B), tT: p('M1.500 1v14M14.500 1v14', T, 1.8) + p('M4 4h8M8 4v9', K, 1.6),
  ln: p('M2 13 14 3', G, 2.2), pl: p('M2 4v5l4-4 4 7 4-5', G, 2) + f('M9 10h3v3H9z'), pg: p('M4 2h9l-3 4v4l3 3H4L2 8z', G, 2), rc: p('M2 2h12v12H2z', G, 2), rd: p('M2 2h12v12H2z', G, 1.8) + p('M6 8h6', B) + o(5.500, 8, 1.5, B) + o(12, 8, 1.5, B),
  ci: o(8, 8, 6, G, 2), c3: o(8, 8, 6, G, 1.8) + o(4, 4, 1.500, B, 1.5, '#fff') + o(12, 4, 1.5, B, 1.5, '#fff') + o(12, 13, 1.5, B, 1.5, '#fff'), a1: p('M12 2Q2 3 3 9t9 5M12 2 8 8l4 6', G, 1.8) + o(8, 8, 1.5, B) + o(12, 14, 1, B), a2: p('M12 3Q2 1 2.500 8t10 5', G, 2) + o(12, 3, 1.3, B) + o(12, 13, 1.3, B), sc: o(8, 8, 6, G, 1.8, '#d4e4f2') + p('M8 8V2M8 8l-5 3', B) + o(8, 8, 1.5, B), el: `<ellipse cx="8" cy="8" rx="6.500" ry="4.500" fill="none" stroke="${G}" stroke-width="2"/>`,
  sp: p('M2 14h3q3 0 3-6t3-6h3', G, 1.6) + o(2.5, 14, 1.2, B) + o(13.5, 2.5, 1.2, B), T: p('M2 2.500h12M8 2v12M5 14h6M2 2v3M14 2v3', K, 1.8), im: p('M1.500 1.500h13v13h-13z', B) + f('M2 14V9l3-2 3 3 4-5 2 4v5zM4 3h3v2H4z', B), lk: p('M6 8l-3 3q-1 2 1 3t3 0l3-3q1-2-1-3M10 8l3-3q1-2-1-3t-3 0L6 5q-1 2 1 3', B, 2.2),
  d1: dim(''), d2: p('M3 13 13 3M1 11l4 4M11 1l4 4M3 9v4h4M9 3h4v4', '#a33228', 1.3), d3: dim(p('M8 4v8', '#a33228')), d4: dim(p('M6 4v8M10 4v8', '#a33228')), d5: p('M2 2v12M14 2v12M2 3h12M2 8h8M2 12h12M10 3v5', '#a33228', 1.3), d6: p('M2 1v13h13M2 14l8-12', G) + p('M5 3q8 1 8 11M11 9l2 5', '#a33228', 1.4), d7: o(7, 10, 4.500, G, 2) + o(7, 10, .8, R) + p('M15 1l-5 6', R, 1.6),
  s1: win + cart(B), s2: win + cart(T), pz: f('M2 5h4q-2-4 1.500-4T9 5h4v4q4-2 3 1.500T13 12v3H9q1-4-1.500-4T6 15H2v-4q3 0 3-2T2 8z', T),
  n1: o(3, 4, 2, G, 1, G) + p('M6 4h4M8 2v4M12 1v6') + t('123', 0, 15, K, 8), n2: o(4, 4, 2, B) + o(12, 4, 2, B) + t('1 2', 2, 15, K, 8), n3: f('M4 1l3 6H1zM12 1l3 6H9z', '#6a7a3a') + t('1 2', 2, 15, K, 8),
  bs: p('M2 1v14M5 1v14', '#8c3a30', 1.5) + p('M14 7q-3-3-5 0t1 5q3 2 5-2', T, 1.6), fo: flag + o(10, 11, 4, T, 1, T) + p('M8 11l2 2 3-4', '#fff'), fg: flag + p('M7 11h8M11 7v8M8 8l6 6M14 8l-6 6', G, 1.6), fa: flag + p('M6 11h8M11 7l4 4-4 4', V, 2), fb: flag + f('M8 6h7v9H8z', R), fc: p('M6 1v7M1 10h6l3-6', T, 2) + f('M7 1l8 4-5 6z', B), fx: flag + p('M8 8l6 6M14 8l-6 6', R, 2),
  dc: p('M1.500 1.500h8v12h-8zM3 4h4M3 6h4M3 9h4M3 11h4', B) + f('M8 6h4l3 3v6H8z', '#fff') + p('M8.500 6.500h3l3 3v5h-6z'), dn: doc() + p('M4 1v7M1 4h7M2 2l5 5M6 2 2 6', O, 1), dg: doc(L) + o(11, 4, 3, L, 1, '#ccc'), dp: doc() + o(11, 4, 3.500, V, 1, V), dl: doc() + p('M0 12h8M4 8l-4 4 4 3', B, 2), dr: doc() + p('M7 12h8M11 8l4 4-4 3', B, 2),
  bp: box + f('M2 2h5v4H2z', O) + f('M7 7h8v7H7z', '#6cc4cc') + p('M11 8v5M8.500 10.500h5', K), gr: p('M1.500 1.500h12v12h-12zM5 2v11M9 2v11M2 5h11M2 9h11', '#8c3a30', 1.4) + o(11, 11, 3, B, 1.500, '#fff'),
  v1: box + o(5, 6, 2, B) + o(11, 6, 2, B) + p('M8 8v5', B) + o(8, 11, 2, B), v2: box + o(8, 8, 3, B) + p('M8 1v4', R, 2), v3: box + o(8, 8, 3, B) + p('M8 1v4M8 11v4', R, 2),
  sq: p('M1 4h14M1 7h14M1 11h14M1 14h14', '#c0683a', 2.2, 'stroke-dasharray="3 1.500"'), q1: mini + f('M8 1h7l-3.500 6z', '#b8402a') + o(11, 12, 2.5, B) + f('M2 9h4v6H2z', '#4a5a4a'), q2: mini + o(11, 4, 2.500, B) + f('M8 15h7l-3.500-7z', '#b8402a') + f('M2 9h4v6H2z', '#4a5a4a'), q3: mini + f('M8 1h7l-3.500 6z', '#b8402a') + o(11, 12, 2.5, B) + p('M2 9v5h4V9', '#8c3a30', 1.5), q4: mini + o(11, 4, 2.500, B) + f('M8 15h7l-3.500-7z', '#b8402a') + p('M2 9v5h4V9', '#8c3a30', 1.5),
  e1: p('M1.500 1.500h13v13h-13z', '#d06a30', 1.6) + f('M5 2h6L8 6z', R) + o(8, 10, 2.5, B), e2: p('M1.500 1.500h13v13h-13z', '#d06a30', 1.6) + f('M5 6h6L8 2z', R) + o(8, 10, 2.5, B), e3: p('M1 3h8M3 1v4M6 1v4', T, 1.500) + f('M8 6h7l-3.500 4z', '#b86a4a') + o(11, 13, 2, B),
  h1: p('M5 1v14', '#8c3a30') + o(5, 8, 3.500, '#c0683a') + o(12, 5, 2, G) + o(12, 12, 2, G), h2: p('M5 1v14', '#8c3a30') + o(5, 8, 3.5, '#a06a5a') + f('M15 4v8l-5-4z', R), x1: f('M2 2h12v5H7v7H2z', L) + f('M8 8h6l-6 6z', '#ccc'), x2: p('M1 8 8 1M1 14 14 1M7 15l8-8', '#999', 3), x3: p('M2.500 3.500h12v11h-12z', '#999', 1.2, dash) + p('M3 0v6M0 3h6', '#999'),
  st: f('M6 3h4v3H6zM4 7h8v3H4zM1 11h14v3H1z', '#8a8a7a') + p('M6.500 3.500h3v3M4.500 7.500h7v3M1.500 11.500h13v2.500h-13z', G), j1: p('M4 1v14M8 1v14M12 1v14', B, 1.8) + p('M1 8h14', '#c05050', 1.8), j2: `<ellipse cx="8" cy="7" rx="6" ry="3" fill="none" stroke="#c05050" stroke-width="2"/>` + p('M8 1v14', '#7a5a8a', 1.6), j3: p('M8 1v14', B, 1.5) + p('M4 2l8 11', '#c84040', 2.2), k1: p('M6 1v14M6 5l8 9', B, 2.2) + p('M3 1l7 9', V, 1.8), k2: o(8, 8, 4, '#5a5a9a', 2) + p('M8 1v14M1 8h14', '#5a5a9a', 1.5), k3: p('M8 1v14M8 4l7 10', B, 2) + p('M2 3l5 5-5 5z', T), k4: p('M1 6h14M1 10h14', '#6a8a3a', 2) + p('M12 2q-5 6 0 12M4 2q5 6 0 12', '#8a6a4a', 1.4),
  l1: conn('M3 14V3h11', [3, 14], [14, 3]), l2: conn('M2 3h11v11', [2, 3], [13, 14]), l3: conn('M3 2v11h11', [3, 2], [14, 13]), l4: conn('M13 2v11H2', [13, 2], [2, 13]), y1: conn('M2 3h5l1 12M8 9l6-6', [2, 3], [14, 3], [8, 14]), y2: conn('M7 2v6l-4 6M7 6l7 8', [7, 2], [2, 14], [14, 14]), y3: conn('M3 2v12M3 12q0-6 10-6', [3, 2], [3, 14], [14, 6]), y4: conn('M14 2v12M13 12q0-6-10-6', [14, 2], [14, 14], [2, 6]), y5: conn('M8 2v12M3 8q5 0 5 5 0-5 6-5', [8, 2], [2, 8], [14, 8], [8, 14]), y6: conn('M8 2v12M2 8q5 0 6 5M8 4l6 4', [8, 2], [2, 9], [14, 6], [8, 14]), y7: conn('M2 8h12', [2, 8], [14, 8]) + f('M7 3l4 5-4 5z', B), y8: conn('M3 3l11 11', [3, 2], [14, 14]),
  pt: f('M4 1v13l3-3 2 4 2-1-2-4h4z', '#fff') + p('M4.500 1v12l3-3 2 5 1.500-.500-2-4.500h4z'), m1: p('M1.500 9.500h6v5h-6zM4 6q0-4 6-3M8 1l3 2-3 3', B) + p('M10.500 5.500h4v9h-4z', K, 1.2, dash), m2: f('M6 2v12H1z', '#cfd8e0') + p('M6 2v12H1zM8 0v16') + p('M10 2v12h5z', K, 1.2, dash), m3: box + p('M2 8h7v7M8 9l5-5M9 3h4v4', B), m4: p('M1.500 2.500h5v11h-5z') + p('M6 8h6M10 6l2 2-2 2', B) + p('M11.500 2.500h4v11h-4z', K, 1.2, dash), m5: p('M1.500 2.500h3v11h-3zM11.500 2.500h3v11h-3z') + p('M5 8h6M9 6l2 2-2 2', B, 1.4), m6: p('M1 5l13-4v14H1z', K, 1.2, dash) + p('M1.500 8.500h6v6h-6M7 9l5-5M8 4h4v4', B),
  o1: f('M1 1h8v8H1z', O) + f('M6 6h8v8H6z', '#9a9a9a') + f('M4 4h6v6H4z', O), o2: f('M7 7h8v8H7z', '#a8a8a8') + f('M2 2h9v9H2z', O), u1: box + f('M3 3h9v9H3z', '#a8a8a8') + o(9, 10, 4.500, T, 1, T) + p('M7 10l2 2 3-4', '#fff', 1.4), u2: box + f('M4 4h11v11H4z', O) + f('M1 1h4v4H1z', '#9a9a9a'), u3: p('M1.500 1.500h13v13h-13z', '#999', 1.2, dash) + p('M4 6h8v5H4z', '#bbb', 2), u4: box + f('M2 2h5v5H2zM6 6h7v7H6z', O), z2: p('M1 9h14M8 9v6', '#7a4a38', 2) + p('M5 1l6 5M11 1 5 6', B, 1.6), z3: p('M1 4h10l3 3', '#b83a28', 2) + p('M8 15V8M4 12l4-4 4 4', B, 2), z4: p('M3 15V3h12', '#2a5f90', 2.2) + p('M1 15V1h14', K, 1, dash), z5: p('M3 15V9l6-6h6', '#2a5f90', 2.2) + p('M1 15V1h14', K, 1, dash)
};
// Toolbar layout: "|" separates groups, "/" starts a new bar, "*" marks a pressed button.
const rows = {
  row1: 'proj1 proj2 proj3 print | wrench | cut copy paste | selx | br1 br2 | undo0 undo redo redo0 | w1 w2 chk tab / ref zs zi zo z1 | al ar | gA gB gC* gD gE | grid* gsn* gob mag magl lad num rul* | wav wif dts / chip net | crt tT / ln pl pg rc rd | ci c3 a1 a2 sc el | sp | T im lk | d1 d2 d3 d4 d5 d6 d7',
  row2: 's1 s2 | pz | n1 n2 n3 | bs | fo fg fa | fb fc | fx / dc* dn dg dp dl dr /+ bp | gr | v1 v2 v3 | sq q1 q2 q3 q4 e1 e2 e3 | h1 h2 | x1 x2 x3 / st | j1 j2 j3 | k1 k2 | k3 | k4 /+ l1 l2 l3 l4 | y1 y2 y3 y4 | y5 y6 | y7 y8',
  row3: 'pt* | m1 m2 m3 m4 m5 m6 | o1 o2 | u1* u2 u3 u4 | z2 z3 z4 z5'
};
for (const id in rows) {
  document.getElementById(id).innerHTML = rows[id].split('/').map(bar => {
    const wide = bar[0] === '+';
    return `<div class="bar${wide ? ' wide' : ''}">` + bar.replace('+', '').trim().split(' ').map(n =>
      n === '|' ? '<i></i>' : `<button${n.endsWith('*') ? ' class="on"' : ''}><svg viewBox="0 0 16 16">${I[n.replace('*', '')]}</svg></button>`).join('') + '</div>';
  }).join('');
}

const c = (x, y, r, k) => `<circle cx="${x}" cy="${y}" r="${r}" fill="${k}"/>`;
const apps = [
  ['', p('M4 6h9v11H4zM4 2v2h9V2M4 21v-2h9v2M17 2v5M17 10v11', '#ddd', 1.4) + f('M16 8h3v3h-3z', '#ddd')],
  ['', p('M8 6V2h8v4', '#3a9ae0', 2) + '<rect x="1" y="5" width="22" height="18" rx="3" fill="#f2f2f2"/>' + f('M7 9h4v4H7z', '#e84a28') + f('M12 9h4v4h-4z', '#7ab82a') + f('M7 14h4v4H7z', '#2a9ae0') + f('M12 14h4v4h-4z', '#f5b820')],
  ['run', f('M1 4h8l2 3h12v14H1z', '#f5c64a') + f('M5 13h14v9h-3v-5H8v5H5z', '#3a86d0')],
  ['', '<rect width="24" height="24" rx="5" fill="#fff"/>' + o(12, 8, 4, '#3a8ae8', 2.4) + o(8, 15, 4, '#2a6ae0', 2.4) + o(16, 15, 4, '#e85a5a', 2.4)],
  ['', f('M4 11h17l-2 12H6z', '#c08a4a') + f('M1 10l5-1 6 3-3 5-6-2z', '#d8a860') + f('M23 10l-5-1-6 3 3 5 6-2z', '#b07838') + f('M6 4h5v6H6z', '#7a5a9a') + f('M13 2h5v8h-5z', '#b8a8a8') + c(12, 4, 2.5, '#5a4a7a')],
  ['', '<ellipse cx="12" cy="13" rx="8" ry="10" fill="#111"/><ellipse cx="12" cy="16" rx="5" ry="6" fill="#fff"/>' + c(9.5, 6, 2, '#fff') + c(14.5, 6, 2, '#fff') + f('M5 11h14v3H5zM7 14h4v4H7z', '#e0302a') + f('M8 9h8l-4 2zM4 22h7v2H4zM13 22h7v2h-7z', '#f5a820')],
  ['', c(12, 13, 11, '#f5622a') + c(13, 13, 6, '#7a4ad0') + f('M2 12Q1 5 6 3q0 3 4 4-5 2-3 8 3 5 10 2-6 8-13 2M14 1q8 4 9 12l-4-5z', '#ffc030')],
  ['', c(12, 12, 11.5, '#f8d80a') + p('M10 3l6 4-3 4', '#18a058', 2.6) + p('M12 4q-2 8 1 12', '#18a058', 2.600) + c(10.5, 17, 4, '#18a058')],
  ['', '<rect width="24" height="24" rx="5" fill="#1c74e8"/>' + o(12, 12, 8.5, '#fff', 1.8) + p('M9 7v10M15 7l-5 5 5 5', '#fff', 2)],
  ['', '<ellipse cx="9" cy="9" rx="8.500" ry="7" fill="#22c262"/><ellipse cx="17" cy="16" rx="6.500" ry="5.500" fill="#e8f0e8"/>' + c(6, 7, 1.2, '#053') + c(12, 7, 1.2, '#053') + c(15, 15, 1, '#555') + c(19, 15, 1, '#555')],
  ['', '<rect width="24" height="24" rx="5" fill="#f0648c"/>' + p('M4 8v8h3v-4H4M10 9v7M12 8v8h3v-4h-3M20 9v7', '#fff', 1.4)],
  ['cur', '<rect width="24" height="24" rx="3" fill="#d8202a"/>' + p('M12 3l9 17H3zM13 8l-2 5h3l-2.500 5', '#fff', 1.6)],
  ['run', f('M8 1l12 3-4 19L2 20z', '#a8d8e0') + f('M10 4l8 2-3 13-10-2z', '#4aa0b0') + p('M20 4l-3 19', '#dde', 1.6)]
];
document.getElementById('apps').innerHTML = apps.map(a => `<button class="${a[0]}"><svg viewBox="0 0 24 24">${a[1]}</svg></button>`).join('');

const same = v => Array(6).fill(v);
const pair = ['2', '1', '4', '3', '6', '5'];
const data = [
  ['连接点类型', same('芯线/导线')], ['电缆连接点', same(null)], ['压力/控制端口', same('未定义')], ['电位传递到', pair],
  ['电位类型', same('未定义')], ['到用电设备/...', same('')], ['信号类型', same('未定义')], ['目标跟踪(PLC...', pair],
  ['目标数', same('2')], ['鞍形跳线的数量', same('')], ['内部/外部', same('内部')], ['本质安全可能', same(null)],
  ['允许相同的连...', same(null)], ['符号连接点', [1, 2, 3, 4, 5, 6].map(n => n + '. 连接点')]
];
document.getElementById('grid').innerHTML = data.map(([h, v], r) => `<tr${r === 3 ? ' class="hot"' : ''}><th>${h}</th>` + v.map((s, i) =>
  r === 0 && i === 0 ? `<td class="cell"><div><select aria-label="${h}"><option>${s}</option></select><svg><use href="#chev"/></svg></div></td>`
    : `<td>${s === null ? `<input type="checkbox" aria-label="${h} ${i + 1}">` : s}</td>`).join('') + '</tr>').join('');

// Grid points of the schematic page, snapped to whole pixels.
let dots = '';
for (let i = 0; i < 83; i++) for (let j = 0; j < 46; j++)
  dots += `M${Math.round(393 + i * 18.28)} ${Math.round(176 + j * 18.27)}.500h1`;
document.getElementById('dots').setAttribute('d', dots);
```
